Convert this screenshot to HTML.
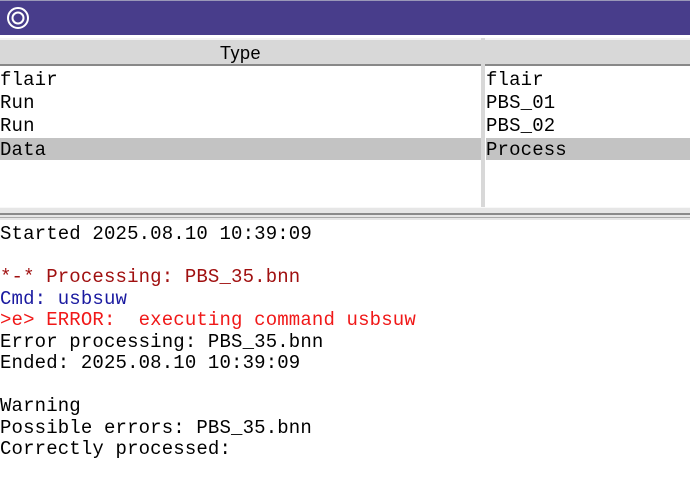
<!DOCTYPE html>
<html><head><style>
body{margin:0;width:690px;height:498px;background:#fff;overflow:hidden;position:relative;font-family:"Liberation Mono","DejaVu Sans Mono",monospace;font-size:19px;letter-spacing:0.15px;color:#000}
.tb{position:absolute;left:0;top:0;width:690px;height:35px;background:#483d8b;border-top:1px solid #9a98b8;box-sizing:border-box}
.hdr{position:absolute;top:38px;height:28px;background:#d8d8d8;border-top:2px solid #f4f4f4;border-bottom:2px solid #888;box-sizing:border-box;font-family:"Liberation Sans",sans-serif;font-size:18px;letter-spacing:0.5px;text-align:center;line-height:26px}
.row{position:absolute;left:0;width:690px;height:23px;line-height:23px;white-space:pre}
.c2{position:absolute;left:486px}
.log{position:absolute;left:0;top:224px;line-height:21.5px;white-space:pre}
</style></head><body>
<div class="tb"><svg width="30" height="30" style="position:absolute;left:4px;top:3px"><circle cx="14" cy="14" r="10" fill="none" stroke="#fff" stroke-width="2"/><circle cx="14" cy="14" r="5.5" fill="none" stroke="#fff" stroke-width="2"/></svg></div>
<div class="hdr" style="left:0;width:481px">Type</div>
<div class="hdr" style="left:485px;width:205px"></div>
<div style="position:absolute;left:481px;top:38px;width:4px;height:170px;background:#d8d8d8"></div>
<div style="position:absolute;left:0;top:138px;width:481px;height:22px;background:#c3c3c3"></div>
<div style="position:absolute;left:486px;top:138px;width:204px;height:22px;background:#c3c3c3"></div>
<div class="row" style="top:69px">flair<span class="c2">flair</span></div>
<div class="row" style="top:92px">Run<span class="c2">PBS_01</span></div>
<div class="row" style="top:115px">Run<span class="c2">PBS_02</span></div>
<div class="row" style="top:139px">Data<span class="c2">Process</span></div>
<div style="position:absolute;left:0;top:207px;width:690px;height:12px;background:#e6e6e6;border-top:1px solid #f8f8f8"></div>
<div style="position:absolute;left:0;top:213px;width:690px;height:2px;background:#8a8a8a"></div>
<div style="position:absolute;left:0;top:217px;width:690px;height:1px;background:#aaa"></div>
<div class="log">Started 2025.08.10 10:39:09

<span style="color:#a01010">*-* Processing: PBS_35.bnn</span>
<span style="color:#1a1aa0">Cmd: usbsuw</span>
<span style="color:#f01818">&gt;e&gt; ERROR:  executing command usbsuw</span>
Error processing: PBS_35.bnn
Ended: 2025.08.10 10:39:09

Warning
Possible errors: PBS_35.bnn
Correctly processed:</div>
</body></html>
